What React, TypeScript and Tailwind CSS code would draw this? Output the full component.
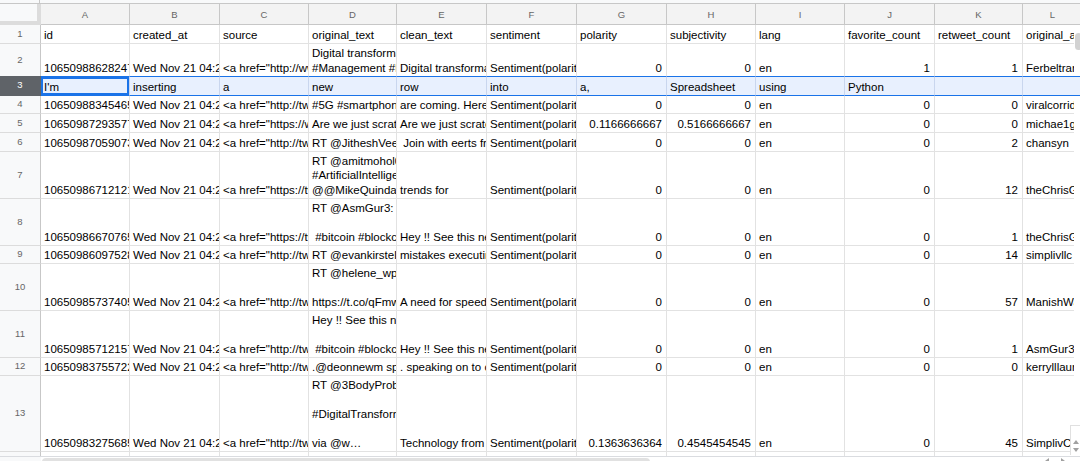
import clsx from 'clsx';

// column letter + width (widths taken from the grid lines of the sheet)
const COLS = [
  { l: 'A', w: 'w-[89px]' },
  { l: 'B', w: 'w-[90px]' },
  { l: 'C', w: 'w-[89px]' },
  { l: 'D', w: 'w-[88px]' },
  { l: 'E', w: 'w-[90px]' },
  { l: 'F', w: 'w-[90px]' },
  { l: 'G', w: 'w-[90px]' },
  { l: 'H', w: 'w-[89px]' },
  { l: 'I', w: 'w-[89px]' },
  { l: 'J', w: 'w-[90px]' },
  { l: 'K', w: 'w-[88px]' },
  { l: 'L', w: 'w-[60px]' },
];

const DATE = 'Wed Nov 21 04:26:55 +0000 2018';
const SENT = 'Sentiment(polarity=0.0, subjectivity=0.0)';

type Row = { n: number; h: string; cells: string[]; selected?: boolean };

const ROWS: Row[] = [
  {
    n: 1,
    h: 'h-[19px]',
    cells: ['id', 'created_at', 'source', 'original_text', 'clean_text', 'sentiment', 'polarity', 'subjectivity', 'lang', 'favorite_count', 'retweet_count', 'original_author'],
  },
  {
    n: 2,
    h: 'h-[33px]',
    cells: ['1065098862824706048', DATE, '<a href="http://www.hootsuite.com"', 'Digital transformation\n#Management #IoT', 'Digital transformation', SENT, '0', '0', 'en', '1', '1', 'Ferbeltran'],
  },
  {
    n: 3,
    h: 'h-[19px]',
    selected: true,
    cells: ["I'm", 'inserting', 'a', 'new', 'row', 'into', 'a,', 'Spreadsheet', 'using', 'Python', '', ''],
  },
  {
    n: 4,
    h: 'h-[18px]',
    cells: ['1065098834546593792', DATE, '<a href="http://twitter.com"', '#5G #smartphones', "are coming. Here's", SENT, '0', '0', 'en', '0', '0', 'viralcorridor'],
  },
  {
    n: 5,
    h: 'h-[19px]',
    cells: ['1065098729357795328', DATE, '<a href="https://www.linkedin.com"', 'Are we just scratching', 'Are we just scratching', SENT, '0.1166666667', '0.5166666667', 'en', '0', '0', 'michae1green'],
  },
  {
    n: 6,
    h: 'h-[19px]',
    cells: ['1065098705907396608', DATE, '<a href="http://twitter.com"', 'RT @JitheshVeetil', ' Join with eerts from', SENT, '0', '0', 'en', '0', '2', 'chansyn'],
  },
  {
    n: 7,
    h: 'h-[47px]',
    cells: ['1065098671212195840', DATE, '<a href="https://twitter.com"', 'RT @amitmohol0\n#ArtificialIntelligence\n@@MikeQuindazzi', 'trends for', SENT, '0', '0', 'en', '0', '12', 'theChrisGeek'],
  },
  {
    n: 8,
    h: 'h-[47px]',
    cells: ['1065098667076513792', DATE, '<a href="https://twitter.com"', 'RT @AsmGur3:\n\n #bitcoin #blockchain', 'Hey !! See this new', SENT, '0', '0', 'en', '0', '1', 'theChrisGeek'],
  },
  {
    n: 9,
    h: 'h-[18px]',
    cells: ['1065098609752887296', DATE, '<a href="http://twitter.com"', 'RT @evankirstel', 'mistakes executing', SENT, '0', '0', 'en', '0', '14', 'simplivllc'],
  },
  {
    n: 10,
    h: 'h-[47px]',
    cells: ['1065098573740589056', DATE, '<a href="http://twitter.com"', 'RT @helene_wplus\n\nhttps://t.co/qFmwXz', 'A need for speed', SENT, '0', '0', 'en', '0', '57', 'ManishWadhwa'],
  },
  {
    n: 11,
    h: 'h-[47px]',
    cells: ['1065098571215703552', DATE, '<a href="http://twitter.com"', 'Hey !! See this new\n\n #bitcoin #blockchain', 'Hey !! See this new', SENT, '0', '0', 'en', '0', '1', 'AsmGur3'],
  },
  {
    n: 12,
    h: 'h-[18px]',
    cells: ['1065098375572283392', DATE, '<a href="http://twitter.com"', '.@deonnewm speaking', '. speaking on to connect', SENT, '0', '0', 'en', '0', '0', 'kerrylllaurie'],
  },
  {
    n: 13,
    h: 'h-[76px]',
    cells: ['1065098327568539648', DATE, '<a href="http://twitter.com"', 'RT @3BodyProblem\n\n#DigitalTransformation\n\nvia @w…', 'Technology from', SENT, '0.1363636364', '0.4545454545', 'en', '0', '45', 'SimplivCorp'],
  },
];

const isNum = (s: string, col: number) => col !== 0 && /^-?\d+(\.\d+)?$/.test(s);

function Cell({ value, col, selected, active }: { value: string; col: number; selected?: boolean; active?: boolean }) {
  const right = isNum(value, col);
  return (
    <div
      className={clsx(
        COLS[col].w,
        'shrink-0 flex flex-col justify-end overflow-hidden pb-[1px] border-r',
        right ? 'items-end pr-[4px] pl-[3px]' : 'pl-[3px] pr-[2px]',
        selected
          ? 'bg-[#e8f0fe] border-r-[#c9d6ee] border-y border-y-[#1a73e8]'
          : 'border-b border-[#e2e2e2]',
        active && 'shadow-[inset_0_0_0_2px_#1a73e8]'
      )}
    >
      {value.split('\n').map((line, i) => (
        <div key={i} className="h-[14.4px] leading-[14.4px] whitespace-pre">
          {line}
        </div>
      ))}
    </div>
  );
}

function Tri({ dir }: { dir: 'up' | 'down' | 'left' | 'right' }) {
  const pts = {
    up: '0,5 3,1 6,5',
    down: '0,1 3,5 6,1',
    left: '5,0 1,3 5,6',
    right: '1,0 5,3 1,6',
  }[dir];
  return (
    <svg width="6" height="6" viewBox="0 0 6 6">
      <polygon points={pts} fill="#a0a0a0" />
    </svg>
  );
}

export default function App() {
  return (
    <div className="relative w-[1080px] h-[461px] overflow-hidden bg-white text-[11.5px] text-black font-['Liberation_Sans',Arial,sans-serif]">
      {/* strip left of the formula bar */}
      <div className="flex h-[4px] bg-[#f8f9fa] border-b border-[#c7c7c7]">
        <div className="w-[40px] shrink-0 border-r border-[#c7c7c7]" />
      </div>

      {/* Column letters */}
      <div className="flex h-[21px]">
        <div className="w-[41px] shrink-0 bg-[#f8f9fa] border-r-[4px] border-b-[4px] border-[#dcdcdc]" />
        {COLS.map((c) => (
          <div
            key={c.l}
            className={clsx(
              c.w,
              'shrink-0 flex items-center justify-center pt-[2px] bg-[#f3f3f3] border-r border-b border-[#c7c7c7] text-[9.5px] text-[#666]'
            )}
          >
            {c.l}
          </div>
        ))}
      </div>

      {/* Rows */}
      {ROWS.map((r) => (
        <div key={r.n} className={clsx('flex', r.h, r.selected && 'relative z-10 mt-[-1px] h-[20px]')}>
          <div
            className={clsx(
              'w-[41px] shrink-0 flex items-center justify-center text-[9.5px] border-r border-b',
              r.selected
                ? 'bg-[#5f6368] text-white border-[#5f6368]'
                : 'bg-[#f8f9fa] text-[#666] border-r-[#c7c7c7] border-b-[#dcdcdc]'
            )}
          >
            {r.n}
          </div>
          {r.cells.map((v, i) => (
            <Cell key={i} value={v} col={i} selected={r.selected} active={r.selected && i === 0} />
          ))}
        </div>
      ))}

      {/* Row 14, only its top edge shows */}
      <div className="flex h-[4px]">
        <div className="w-[41px] shrink-0 bg-[#f8f9fa] border-r border-[#c7c7c7]" />
        {COLS.map((c) => (
          <div key={c.l} className={clsx(c.w, 'shrink-0 border-r border-[#e2e2e2]')} />
        ))}
      </div>

      {/* Horizontal scrollbar */}
      <div className="flex h-[6px] border-t border-[#dadce0]">
        <div className="w-[41px] shrink-0 bg-[#f8f9fa]" />
        <div className="ml-[1px] mt-[1px] w-[608px] h-[8px] rounded-[4px] bg-[#e1e1e1]" />
        <div className="flex-1" />
        <div className="flex items-start gap-[10px] pt-[1px] pr-[14px]">
          <Tri dir="left" />
          <Tri dir="right" />
        </div>
      </div>

      {/* Vertical scrollbar overlay */}
      <div className="absolute left-[1074px] top-[25px] w-[6px] h-[430px] bg-white">
        <div className="ml-[1px] mt-[8px] w-[7px] h-[17px] rounded-[4px] bg-[#d2d2d2]" />
      </div>
      <div className="absolute left-[1070px] top-[425px] w-[10px] h-[30px] bg-white border-l border-t border-[#e0e0e0] flex flex-col items-center justify-end gap-[2px] pb-[2px]">
        <Tri dir="up" />
        <Tri dir="down" />
      </div>
    </div>
  );
}
